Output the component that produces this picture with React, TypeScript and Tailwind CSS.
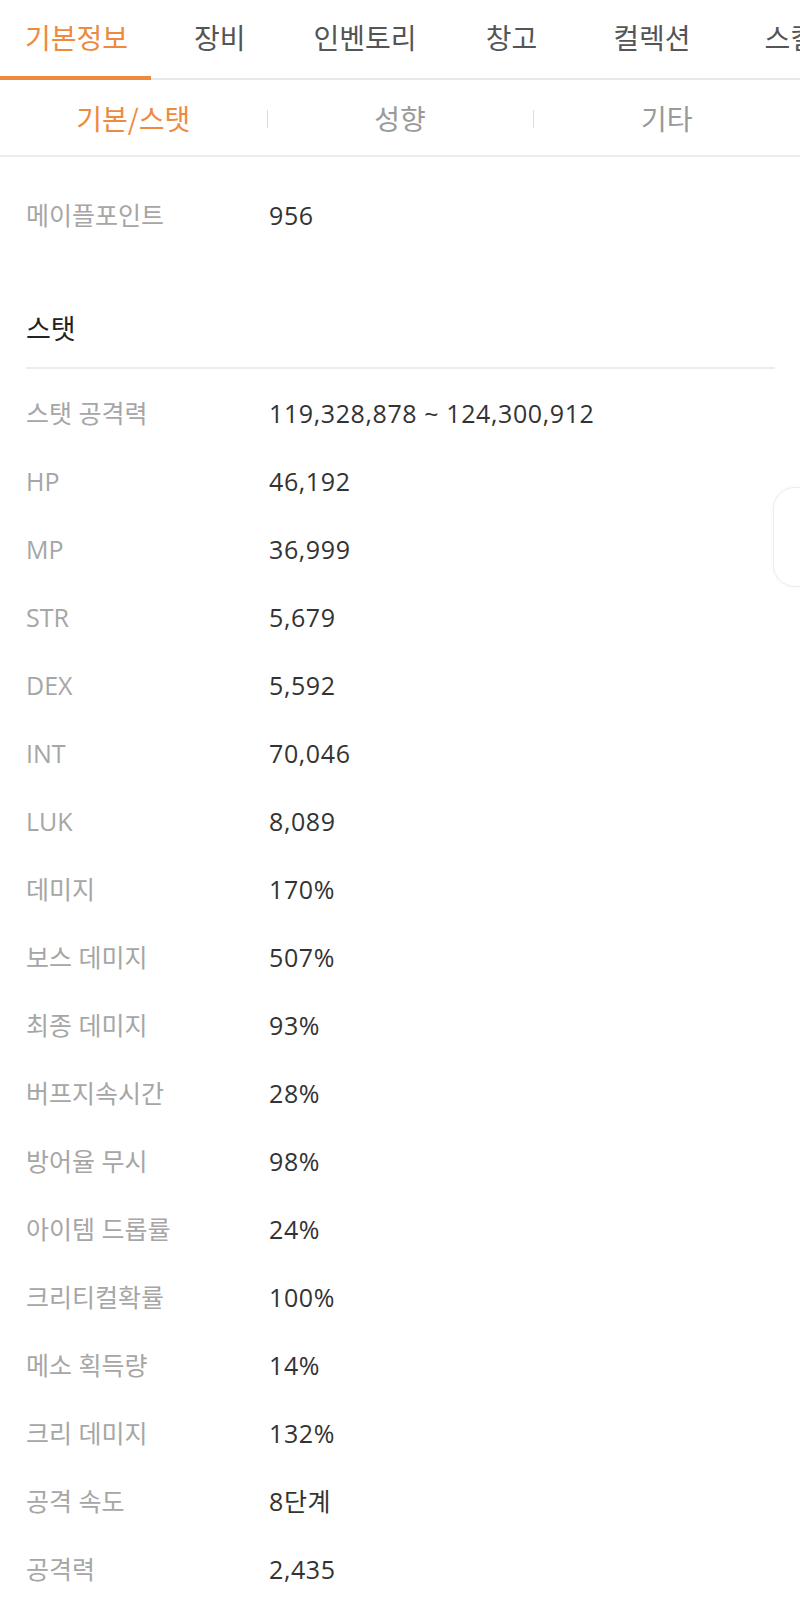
import React from "react";

const tabs: [string, string][] = [
  ["기본정보", "ml-[25px]"],
  ["장비", "ml-[66px]"],
  ["인벤토리", "ml-[68px]"],
  ["창고", "ml-[69px]"],
  ["컬렉션", "ml-[76px]"],
  ["스킬", "ml-[74px]"],
];
const subTabs = ["기본/스탯", "성향", "기타"];

const stats: [string, string][] = [
  ["스탯 공격력", "119,328,878 ~ 124,300,912"],
  ["HP", "46,192"],
  ["MP", "36,999"],
  ["STR", "5,679"],
  ["DEX", "5,592"],
  ["INT", "70,046"],
  ["LUK", "8,089"],
  ["데미지", "170%"],
  ["보스 데미지", "507%"],
  ["최종 데미지", "93%"],
  ["버프지속시간", "28%"],
  ["방어율 무시", "98%"],
  ["아이템 드롭률", "24%"],
  ["크리티컬확률", "100%"],
  ["메소 획득량", "14%"],
  ["크리 데미지", "132%"],
  ["공격 속도", "8단계"],
  ["공격력", "2,435"],
];

const latin = { fontFamily: '"Open Sans", "Noto Sans CJK KR", sans-serif' };

function Row({ label, value }: { label: string; value: string }) {
  return (
    <div className="flex items-center h-[68px]">
      <div className="w-[243px] shrink-0 text-[25px] text-[#a6a6a6]" style={latin}>
        {label}
      </div>
      <div className="text-[25px] tracking-[0.6px] text-[#333333] whitespace-nowrap" style={latin}>
        {value}
      </div>
    </div>
  );
}

export default function App() {
  return (
    <div
      className="relative w-[800px] h-[1610px] overflow-hidden bg-white"
      style={{ fontFamily: '"Noto Sans CJK KR", "Noto Sans", sans-serif' }}
    >
      {/* main tabs */}
      <div className="relative h-[80px] border-b-2 border-[#e8e8e8] flex items-center whitespace-nowrap">
        {tabs.map(([t, ml], i) => (
          <div
            key={t}
            className={`${ml} shrink-0 text-[28px] pb-[4px] ${i === 0 ? "text-[#ee8a3e]" : "text-[#555555]"}`}
          >
            {t}
          </div>
        ))}
        <div className="absolute left-0 bottom-[-2px] w-[151px] h-[4px] bg-[#ee8a3e]" />
      </div>

      {/* sub tabs */}
      <div className="grid grid-cols-3 h-[77px] border-b-2 border-[#ebebeb]">
        {subTabs.map((t, i) => (
          <div key={t} className="relative flex items-center justify-center">
            <span className={`text-[28px] ${i === 0 ? "text-[#ee8a3e]" : "text-[#9a9a9a]"}`}>{t}</span>
            {i > 0 && <div className="absolute left-0 top-[30px] w-px h-[18px] bg-[#dddddd]" />}
          </div>
        ))}
      </div>

      {/* scrolled content */}
      <div className="px-[26px] overflow-hidden h-[1451px]">
        <div className="pt-[25px]">
          <Row label="메이플포인트" value="956" />
        </div>

        <div className="mt-[60px] h-[36px] flex items-center text-[27px] text-[#222222]">스탯</div>
        <div className="mt-[21px] h-[2px] w-[749px] bg-[#ececec]" />

        <div className="pt-[11px]">
          {stats.map(([l, v]) => (
            <Row key={l} label={l} value={v} />
          ))}
        </div>
      </div>

      {/* floating side handle */}
      <div className="absolute left-[773px] top-[487px] w-[60px] h-[100px] rounded-[22px] border border-[#ececec] bg-white shadow-[0_0_4px_rgba(0,0,0,0.04)]" />
    </div>
  );
}
